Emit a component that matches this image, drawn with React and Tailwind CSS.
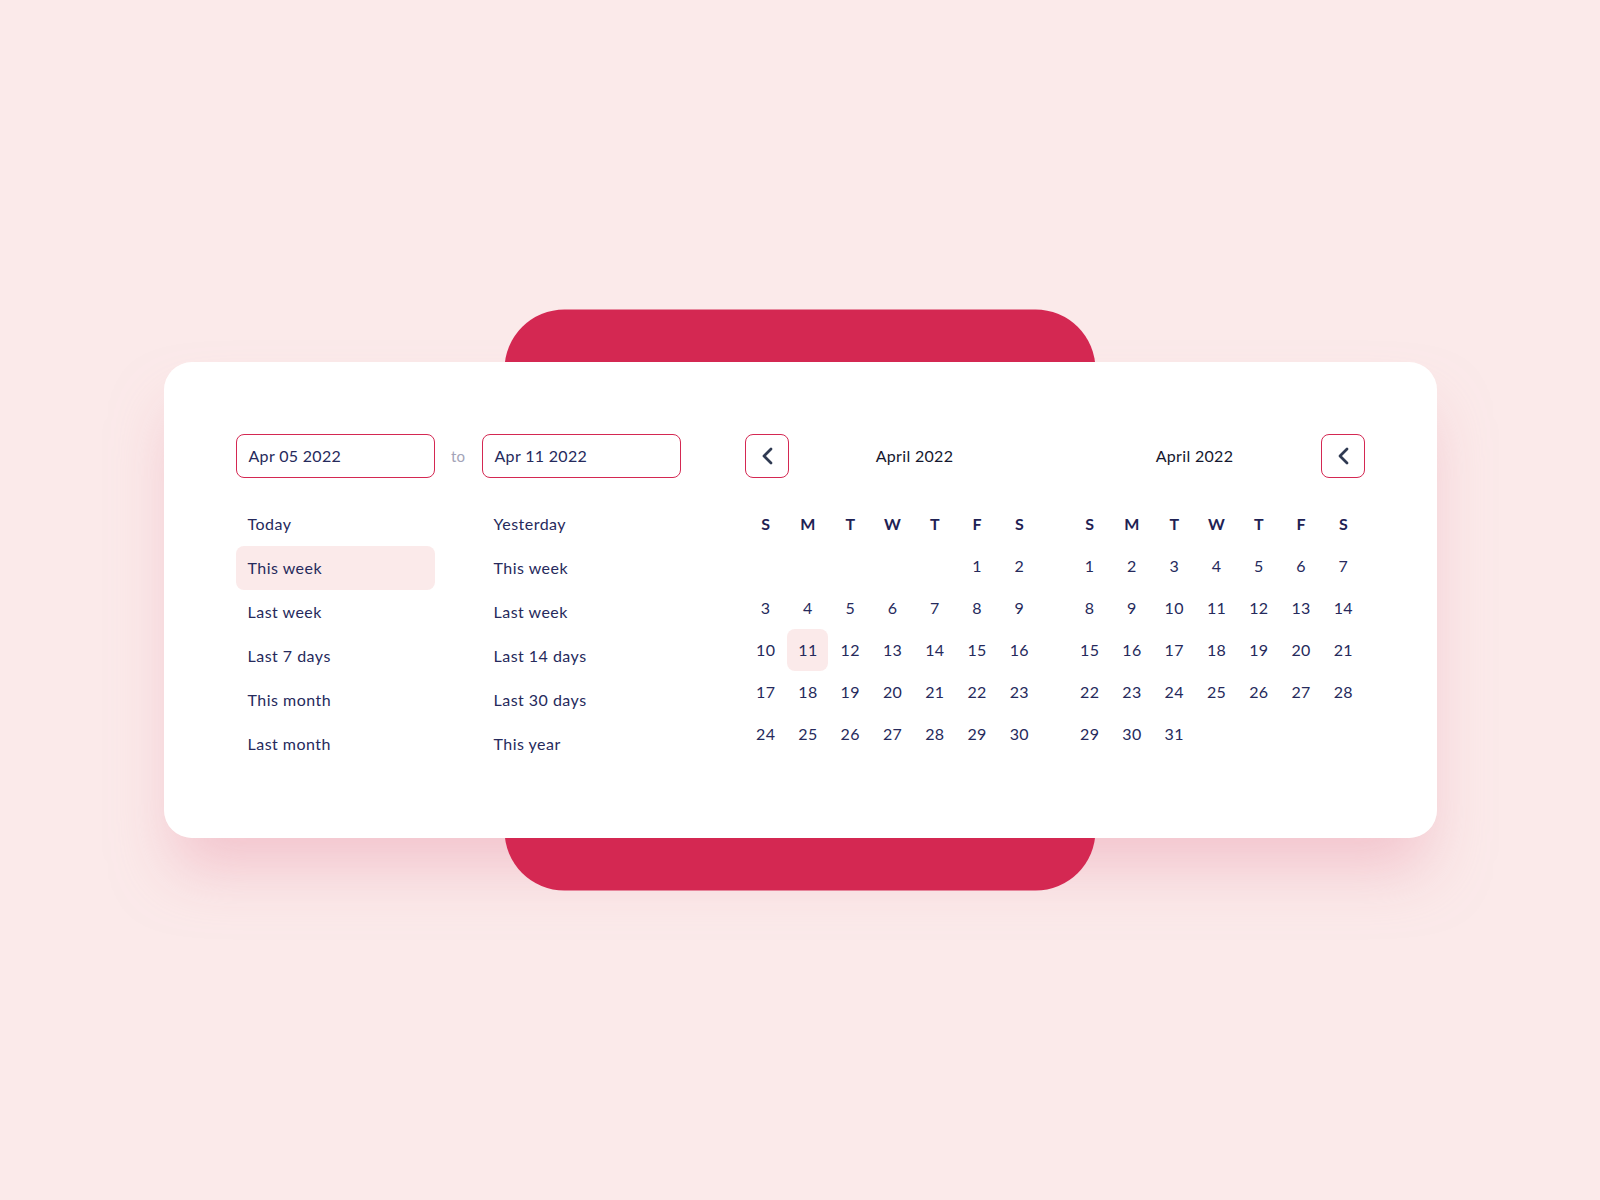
import React from "react";

const presetsLeft = ["Today", "This week", "Last week", "Last 7 days", "This month", "Last month"];
const presetsRight = ["Yesterday", "This week", "Last week", "Last 14 days", "Last 30 days", "This year"];
const weekdays = ["S", "M", "T", "W", "T", "F", "S"];

function ChevronLeft() {
  return (
    <svg width="12" height="18" viewBox="0 0 12 18" fill="none">
      <path d="M10 2 L3 9 L10 16" stroke="#2F3A52" strokeWidth="2.8" strokeLinecap="round" strokeLinejoin="round" />
    </svg>
  );
}

function NavButton() {
  return (
    <button className="w-[44px] h-[44px] shrink-0 flex items-center justify-center rounded-[8px] border border-[#D42852] bg-white">
      <ChevronLeft />
    </button>
  );
}

function MonthGrid({ offset, days, selected }) {
  const cells = [];
  for (let i = 0; i < offset; i++) cells.push(null);
  for (let d = 1; d <= days; d++) cells.push(d);
  return (
    <div className="grid grid-cols-7 w-[296px] mt-[25px]">
      {weekdays.map((w, i) => (
        <div key={"w" + i} className="h-[42px] flex items-center justify-center text-[16px] font-bold text-[#1F2254]">
          {w}
        </div>
      ))}
      {cells.map((d, i) => (
        <div key={i} className="h-[42px] flex items-center justify-center">
          {d && (
            <span
              className={
                "w-[41px] h-[42px] flex items-center justify-center rounded-[8px] text-[16px] tracking-[0.02em] text-[#262A5C] " +
                (d === selected ? "bg-[#FBEAEA]" : "")
              }
            >
              {d}
            </span>
          )}
        </div>
      ))}
    </div>
  );
}

function DateInput({ value }) {
  return (
    <div className="w-[199px] h-[44px] flex items-center px-[12px] rounded-[8px] border border-[#D42852] text-[16px] tracking-[0.02em] text-[#262A5C]">
      {value}
    </div>
  );
}

function PresetColumn({ items, active }) {
  return (
    <div className="flex flex-col w-[199px]">
      {items.map((t, i) => (
        <div
          key={t}
          className={
            "h-[44px] flex items-center px-[12px] rounded-[8px] text-[16px] tracking-[0.03em] text-[#262A5C] " +
            (i === active ? "bg-[#FBEAEA]" : "")
          }
        >
          {t}
        </div>
      ))}
    </div>
  );
}

export default function App() {
  return (
    <div
      className="min-h-[1200px] w-full bg-[#FBEAEA] flex items-center justify-center overflow-hidden"
      style={{ fontFamily: "Lato, 'Noto Sans', sans-serif" }}
    >
      <div className="relative w-[1273px] h-[476px]">
        {/* soft pink shadow, kept under the red tab */}
        <div className="absolute inset-0 rounded-[28px] shadow-[0_40px_60px_-10px_rgba(236,160,178,0.5)]" />

        {/* red backdrop tab behind the card */}
        <div className="absolute left-1/2 top-1/2 -translate-x-1/2 -translate-y-1/2 w-[591px] h-[581px] rounded-[60px] bg-[#D42852]" />

        <div className="relative w-full h-full bg-white rounded-[28px] p-[72px] flex">
          {/* range inputs + presets */}
          <div className="flex flex-col">
            <div className="flex items-center">
              <DateInput value="Apr 05 2022" />
              <span className="w-[47px] text-center text-[15px] text-[#A3A3B8]">to</span>
              <DateInput value="Apr 11 2022" />
            </div>
            <div className="flex mt-[24px] gap-[47px]">
              <PresetColumn items={presetsLeft} active={1} />
              <PresetColumn items={presetsRight} active={-1} />
            </div>
          </div>

          {/* first month */}
          <div className="ml-[64px] flex flex-col w-[296px]">
            <div className="flex items-center h-[44px]">
              <NavButton />
              <div className="flex-1 text-center text-[16px] tracking-[0.02em] text-[#16182E]">April 2022</div>
            </div>
            <MonthGrid offset={5} days={30} selected={11} />
          </div>

          {/* second month */}
          <div className="ml-[28px] flex flex-col w-[296px]">
            <div className="flex items-center h-[44px]">
              <div className="flex-1 text-center text-[16px] tracking-[0.02em] text-[#16182E]">April 2022</div>
              <NavButton />
            </div>
            <MonthGrid offset={0} days={31} selected={0} />
          </div>
        </div>
      </div>
    </div>
  );
}
